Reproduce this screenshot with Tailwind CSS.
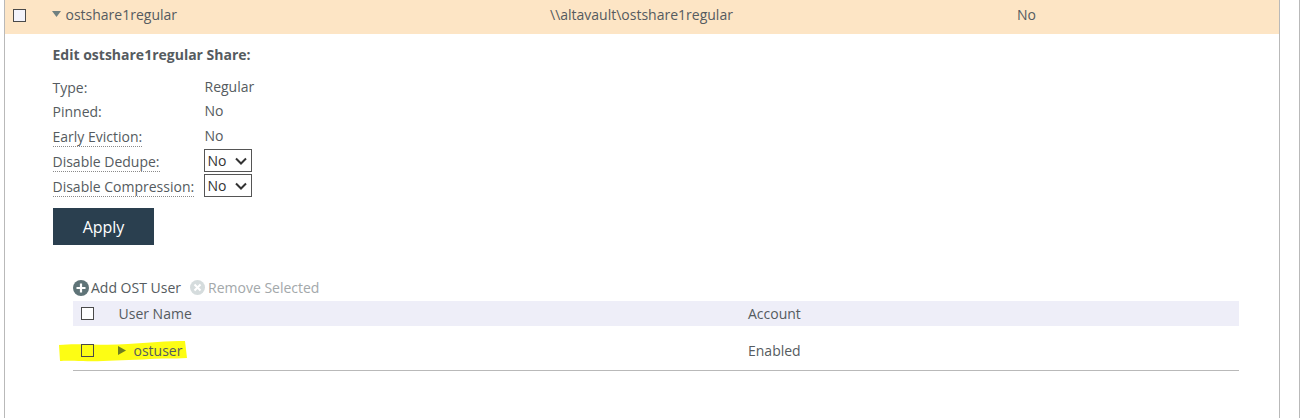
<!DOCTYPE html>
<html lang="en">
<head>
    <meta charset="UTF-8">
    <title>OST Shares</title>
    <script src="https://cdn.jsdelivr.net/npm/@tailwindcss/browser@4"></script>
</head>
<body class="bg-white w-[1300px] h-[418px] overflow-hidden font-['Open_Sans',sans-serif] text-[14px] text-[#555b60]">
    <div class="flex h-[418px]">
        <div class="ml-1 w-[1276px] h-[418px] border-x border-[#b9b9b9] shrink-0">
            <!-- share row -->
            <div class="relative h-[34px] bg-[#fde5c5] flex items-center leading-[30px] pb-[4px]">
                <span class="ml-[8px] w-[13px] h-[13px] border border-[#4a4a4a] bg-[#f3f3fb]"></span>
                <svg class="ml-[26px] mt-[-3px]" width="9" height="6" viewBox="0 0 9 6"><path d="M0 0h9L4.500 6z" fill="#6f8080"/></svg>
                <span class="ml-[4.500px] w-[484.500px]">ostshare1regular</span>
                <span class="w-[467px]">\\altavault\ostshare1regular</span>
                <span>No</span>
            </div>
            <!-- edit form -->
            <div class="pl-[48px] pt-[11px]">
                <h3 class="font-bold leading-[20px] mb-[13px] ml-[-0.5px]">Edit ostshare1regular Share:</h3>
                <div class="grid grid-cols-[152px_1fr] leading-[20px] ml-[-0.5px]">
                    <div class="h-[24px]">Type:</div><div class="h-[24px] mt-[-1px]">Regular</div>
                    <div class="h-[25px]">Pinned:</div><div class="h-[25px] mt-[-1px]">No</div>
                    <div class="h-[25px]"><span class="border-b border-dotted border-[#8a8a8a] inline-block leading-[19px]">Early Eviction:</span></div><div class="h-[25px] mt-[-1px]">No</div>
                    <div class="h-[24px]"><span class="border-b border-dotted border-[#8a8a8a] inline-block leading-[19px]">Disable Dedupe:</span></div>
                    <div class="h-[24px] mt-[-3px] ml-[-1px]">
                        <div class="w-[48px] h-[23px] border border-[#555] flex items-center pl-[3px] text-[#333]">No
                            <svg class="ml-[9px]" width="12" height="8" viewBox="0 0 12 8"><path d="M1 1.500l5 5 5-5" fill="none" stroke="#333" stroke-width="2"/></svg>
                        </div>
                    </div>
                    <div class="h-[25px] pt-[1px]"><span class="border-b border-dotted border-[#8a8a8a] inline-block leading-[19px]">Disable Compression:</span></div>
                    <div class="h-[25px] mt-[-2px] ml-[-1px]">
                        <div class="w-[48px] h-[23px] border border-[#555] flex items-center pl-[3px] text-[#333]">No
                            <svg class="ml-[9px]" width="12" height="8" viewBox="0 0 12 8"><path d="M1 1.500l5 5 5-5" fill="none" stroke="#333" stroke-width="2"/></svg>
                        </div>
                    </div>
                </div>
                <button class="block mt-[7px] w-[101px] h-[37px] bg-[#2a3f4f] text-white text-[16px]">Apply</button>
            </div>
            <!-- users table -->
            <div class="ml-[68px] w-[1166px] mt-[30px]">
                <div class="flex items-center h-[25px] mb-[1px]">
                    <svg width="16" height="16" viewBox="0 0 16 16"><circle cx="8" cy="8" r="8" fill="#5f7478"/><path d="M8 3.500v9M3.500 8h9" stroke="#fff" stroke-width="2.2"/></svg>
                    <span class="ml-[2px]">Add OST User</span>
                    <svg class="ml-[9px]" width="15" height="15" viewBox="0 0 15 15"><circle cx="7.500" cy="7.500" r="7.500" fill="#d5dcdd"/><path d="M4.500 4.500l6 6M10.500 4.500l-6 6" stroke="#fff" stroke-width="2"/></svg>
                    <span class="ml-[3px] text-[#a3a8aa]">Remove Selected</span>
                </div>
                <div class="flex items-center h-[25px] bg-[#eeeef8]">
                    <span class="ml-[8px] w-[13px] h-[13px] border border-[#4a4a4a] bg-white"></span>
                    <span class="ml-[24.500px] w-[629.500px]">User Name</span>
                    <span>Account</span>
                </div>
                <div class="relative flex items-center h-[45px] pt-[5px] border-b border-[#b9b9b9]">
                    <svg class="absolute left-[-15px] top-[14px]" width="130" height="23" viewBox="0 0 130 23"><path d="M1 5C20 3 45 6 70 4 90 2.500 110 1 127 1L129 18C115 19 100 18 85 19.500 60 20 40 22 25 21 12 20.500 6 20.500 2 21z" fill="#fdfd14"/></svg>
                    <span class="relative ml-[8px] w-[13px] h-[13px] border border-[#4a4a4a]"></span>
                    <svg class="relative ml-[24px]" width="8" height="9" viewBox="0 0 8 9"><path d="M0 0l8 4.500-8 4.500z" fill="#6f7f20"/></svg>
                    <span class="relative ml-[7.500px] w-[614.500px]">ostuser</span>
                    <span>Enabled</span>
                </div>
            </div>
        </div>
        <div class="ml-[19px] w-px h-[418px] bg-[#b9b9b9]"></div>
    </div>
</body>
</html>
